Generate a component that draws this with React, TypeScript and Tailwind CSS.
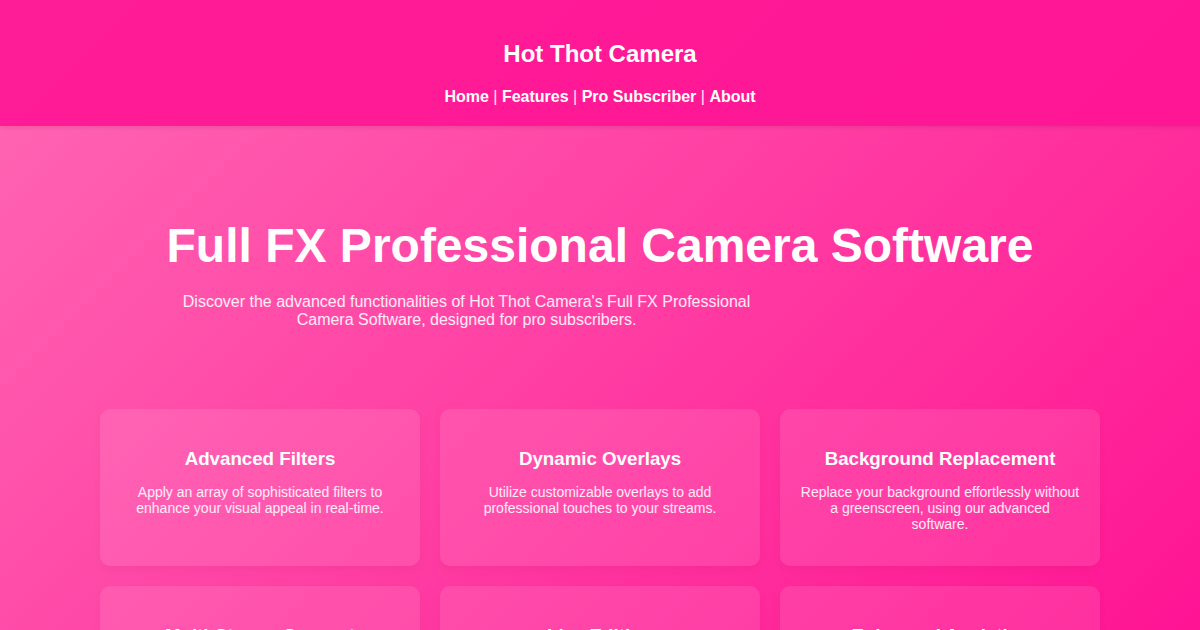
import React from 'react';

interface Feature {
  title: string;
  text: string;
}

const FEATURES: Feature[] = [
  { title: 'Advanced Filters', text: 'Apply an array of sophisticated filters to enhance your visual appeal in real-time.' },
  { title: 'Dynamic Overlays', text: 'Utilize customizable overlays to add professional touches to your streams.' },
  { title: 'Background Replacement', text: 'Replace your background effortlessly without a greenscreen, using our advanced software.' },
  { title: 'Multi-Stream Support', text: 'Stream to multiple platforms at once without losing quality or performance.' },
  { title: 'Live Editing', text: 'Make adjustments on the fly while you are live, with zero interruptions.' },
  { title: 'Enhanced Analytics', text: 'Track your audience and engagement with detailed, real-time analytics.' },
];

const NAV = ['Home', 'Features', 'Pro Subscriber', 'About'];

const App: React.FC = () => {
  return (
    <div className="min-h-screen bg-fixed bg-[linear-gradient(135deg,#ff69b4,#ff1493)] text-white font-['Liberation_Sans',Arial,sans-serif]">
      <header className="bg-[#ff1493]/90 py-5 text-center shadow-[0_2px_4px_rgba(0,0,0,0.08)]">
        <h1 className="my-5 text-2xl leading-7 font-bold">Hot Thot Camera</h1>
        <nav className="text-base leading-[18px]">
          {NAV.map((item, i) => (
            <React.Fragment key={item}>
              {i > 0 && <span className="text-white/90"> | </span>}
              <a href="#" className="font-bold text-white">{item}</a>
            </React.Fragment>
          ))}
        </nav>
      </header>

      <section className="pt-[92px] text-center">
        <div className="inline-block">
          <h1 className="text-5xl leading-[55px] font-bold">Full FX Professional Camera Software</h1>
          <p className="mt-5 max-w-[600px] text-base leading-[18px] text-white/90">
            Discover the advanced functionalities of Hot Thot Camera's Full FX Professional Camera Software, designed for pro subscribers.
          </p>
        </div>
      </section>

      <section className="mx-auto mt-[77px] grid w-[1000px] grid-cols-3 gap-5 pb-10">
        {FEATURES.map(f => (
          <div key={f.title} className="rounded-[10px] bg-white/10 p-5 text-center shadow-[0_4px_8px_rgba(0,0,0,0.04)]">
            <h3 className="mt-[19px] mb-[14px] text-[18.72px] leading-[22px] font-bold">{f.title}</h3>
            <p className="mb-[14px] text-sm leading-4 text-white/90">{f.text}</p>
          </div>
        ))}
      </section>
    </div>
  );
};

export default App;
